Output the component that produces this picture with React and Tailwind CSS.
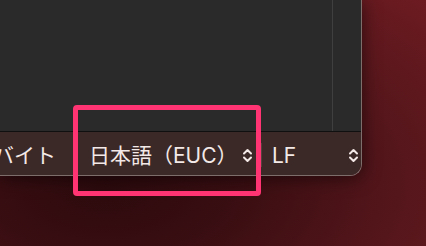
import React from "react";

function Chevrons() {
  return (
    <svg width="11" height="15" viewBox="0 0 11 15" fill="none" stroke="#f3e9e7" strokeWidth="2" strokeLinecap="round" strokeLinejoin="round">
      <path d="M2 5.5 L5.5 2 L9 5.5" />
      <path d="M2 9.5 L5.5 13 L9 9.5" />
    </svg>
  );
}

export default function App() {
  const font = { fontFamily: '"Inter", "Noto Sans CJK JP", sans-serif' };
  return (
    <div className="relative w-[426px] h-[246px] overflow-hidden bg-[radial-gradient(ellipse_at_25%_75%,#2c0a0d_0%,#3a0e12_30%,#55161b_65%,#6c1b21_100%)]">
      <div className="w-[362px] h-[176px] flex flex-col rounded-br-[12px] overflow-hidden border-r border-b border-[#7d6e6c] shadow-[0_2px_18px_rgba(0,0,0,0.55)]">
        <div className="h-[131px] flex bg-[#2a2a2a]">
          <div className="w-[332px]" />
          <div className="flex-1 border-l border-[#3f3f3f]" />
        </div>
        <div className="h-px bg-[#101010]" />
        <div className="flex-1 flex items-center bg-[#3b2927] text-[#f3e9e7] text-[21px] leading-none pt-[3px]" style={font}>
          <div className="w-[89px] overflow-hidden whitespace-nowrap">
            <span className="ml-[-7px] block">バイト</span>
          </div>
          <div className="w-[172px] flex items-center">
            <span className="whitespace-nowrap">日本語（EUC）</span>
            <span className="ml-auto mr-[8px] flex"><Chevrons /></span>
          </div>
          <div className="w-px h-[24px] bg-[#55423f]" />
          <div className="flex-1 flex items-center pl-[10px]">
            <span>LF</span>
            <span className="ml-auto mr-[2px] flex"><Chevrons /></span>
          </div>
        </div>
      </div>
      <div className="absolute left-[73px] top-[105px] w-[188px] h-[91px] border-[5px] border-[#ff3472] rounded-[4px]" />
    </div>
  );
}
